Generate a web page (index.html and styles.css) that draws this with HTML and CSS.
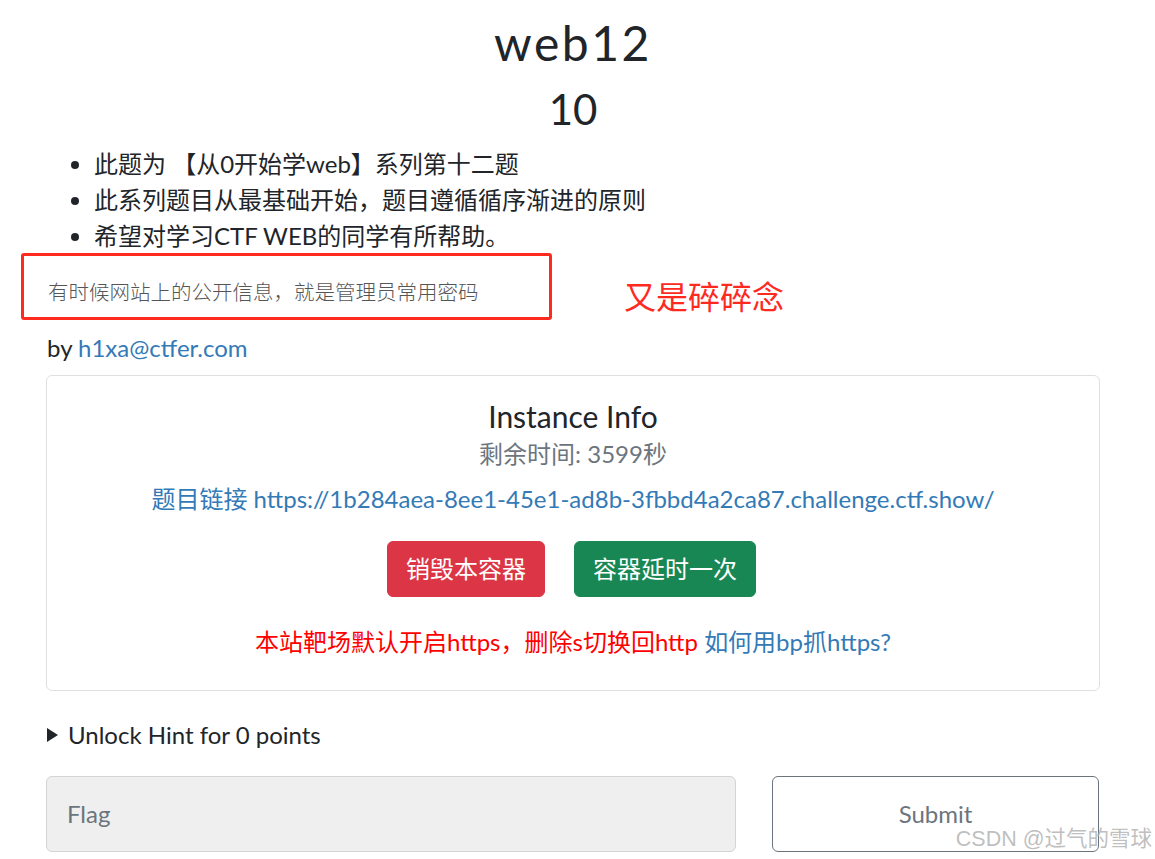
FILE: index.html
```html
<!DOCTYPE html>
<html lang="zh-CN">
<head>
<meta charset="utf-8">
<title>web12</title>
<link rel="stylesheet" href="styles.css">
</head>
<body>
<main class="challenge">
  <h2 class="chal-name">web12</h2>
  <h3 class="chal-value">10</h3>
  <ul class="chal-list">
    <li>此题为 【从0开始学web】系列第十二题</li>
    <li>此系列题目从最基础开始，题目遵循循序渐进的原则</li>
    <li>希望对学习CTF WEB的同学有所帮助。</li>
  </ul>
  <div class="desc">
    <p class="desc-text">有时候网站上的公开信息，就是管理员常用密码</p>
    <div class="mark-box"></div>
    <div class="mark-note">又是碎碎念</div>
  </div>
  <div class="author">by <a href="#">h1xa@ctfer.com</a></div>

  <section class="card">
    <h5 class="card-title">Instance Info</h5>
    <div class="time">剩余时间: 3599秒</div>
    <div class="link-line"><a href="#">题目链接 https://1b284aea-8ee1-45e1-ad8b-3fbbd4a2ca87.challenge.ctf.show/</a></div>
    <div class="btns">
      <button class="btn btn-red">销毁本容器</button>
      <button class="btn btn-green">容器延时一次</button>
    </div>
    <div class="notice"><span class="red">本站靶场默认开启https，删除s切换回http</span> <a href="#">如何用bp抓https?</a></div>
  </section>

  <details class="hint">
    <summary>Unlock Hint for 0 points</summary>
  </details>

  <form class="flag-form">
    <input class="flag-input" type="text" placeholder="Flag">
    <button class="submit" type="button">Submit</button>
  </form>
</main>
<div class="watermark">CSDN @过气的雪球</div>
</body>
</html>
```
FILE: styles.css
```css
html, body {
  margin: 0;
  padding: 0;
  background: #fff;
}
body {
  font-family: Lato, "Noto Sans CJK SC", sans-serif;
  font-size: 24px;
  line-height: 36px;
  color: #212529;
  position: relative;
  min-height: 859px;
  overflow: hidden;
}
a {
  color: #337ab7;
  text-decoration: none;
}
.challenge {
  width: 1054px;
  margin-left: 46px;
  padding-top: 14px;
}
.chal-name {
  margin: 0 0 12px;
  font-size: 48px;
  line-height: 57.6px;
  font-weight: 400;
  text-align: center;
  letter-spacing: 2.5px;
}
.chal-value {
  margin: 0 0 12px;
  font-size: 42px;
  line-height: 50.4px;
  font-weight: 400;
  text-align: center;
}
.chal-list {
  margin: 0 0 22px;
  padding-left: 48px;
}
.desc {
  position: relative;
}
.desc-text {
  margin: 0 0 22px;
  padding-left: 2px;
  font-family: "Noto Sans CJK SC", sans-serif;
  font-size: 20.5px;
  line-height: 31.5px;
  color: #555;
  font-weight: 300;
}
.mark-box {
  position: absolute;
  left: -25px;
  top: -23px;
  width: 525px;
  height: 61px;
  border: 3px solid #ff2a1f;
  border-radius: 3px;
}
.mark-note {
  position: absolute;
  left: 578px;
  top: 3px;
  font-family: "Noto Sans CJK SC", sans-serif;
  font-size: 32px;
  line-height: 32px;
  color: #ff2a1f;
}
.author {
  padding-left: 1px;
}
.card {
  margin-top: 9px;
  border: 1px solid rgba(0, 0, 0, 0.125);
  border-radius: 6px;
  padding: 22px 24px 30px;
  text-align: center;
}
.card-title {
  margin: 0 0 2px;
  font-size: 30px;
  line-height: 36px;
  font-weight: 400;
}
.time {
  color: #6c757d;
  margin-bottom: 9px;
}
.link-line {
  margin-bottom: 24px;
}
.btns {
  display: flex;
  justify-content: center;
  gap: 29px;
  margin-bottom: 27px;
  padding-right: 3px;
}
.btn {
  font-family: Lato, "Noto Sans CJK SC", sans-serif;
  font-size: 24px;
  line-height: 36px;
  color: #fff;
  border: 1px solid transparent;
  border-radius: 6px;
  padding: 9px 18px;
  cursor: pointer;
}
.btn-red {
  background: #dc3545;
  border-color: #dc3545;
}
.btn-green {
  background: #198754;
  border-color: #198754;
}
.notice .red {
  color: #ff0000;
}
.hint {
  margin-top: 26px;
  padding-left: 1px;
}
.hint summary {
  list-style: none;
  display: flex;
  align-items: center;
  gap: 10px;
  cursor: pointer;
}
.hint summary::-webkit-details-marker {
  display: none;
}
.hint summary::before {
  content: "";
  width: 0;
  height: 0;
  border-top: 7px solid transparent;
  border-bottom: 7px solid transparent;
  border-left: 11px solid #212529;
}
.flag-form {
  display: flex;
  gap: 36px;
  margin-top: 23px;
}
.flag-input {
  flex: 1;
  height: 76px;
  box-sizing: border-box;
  background: #efefef;
  border: 1px solid #d4d4d4;
  border-radius: 6px;
  padding: 0 20px;
  font-family: Lato, sans-serif;
  font-size: 24px;
  color: #495057;
}
.flag-input::placeholder {
  color: #6c757d;
}
.submit {
  width: 327px;
  height: 76px;
  box-sizing: border-box;
  background: #fff;
  border: 1px solid #6c757d;
  border-radius: 6px;
  font-family: Lato, sans-serif;
  font-size: 24px;
  color: #6c757d;
  margin-right: 1px;
}
.watermark {
  position: absolute;
  right: 3px;
  bottom: 8px;
  font-family: "Liberation Sans", "Noto Sans CJK SC", sans-serif;
  font-size: 21.5px;
  line-height: 24px;
  color: rgba(170, 170, 170, 0.75);
  pointer-events: none;
}
```
